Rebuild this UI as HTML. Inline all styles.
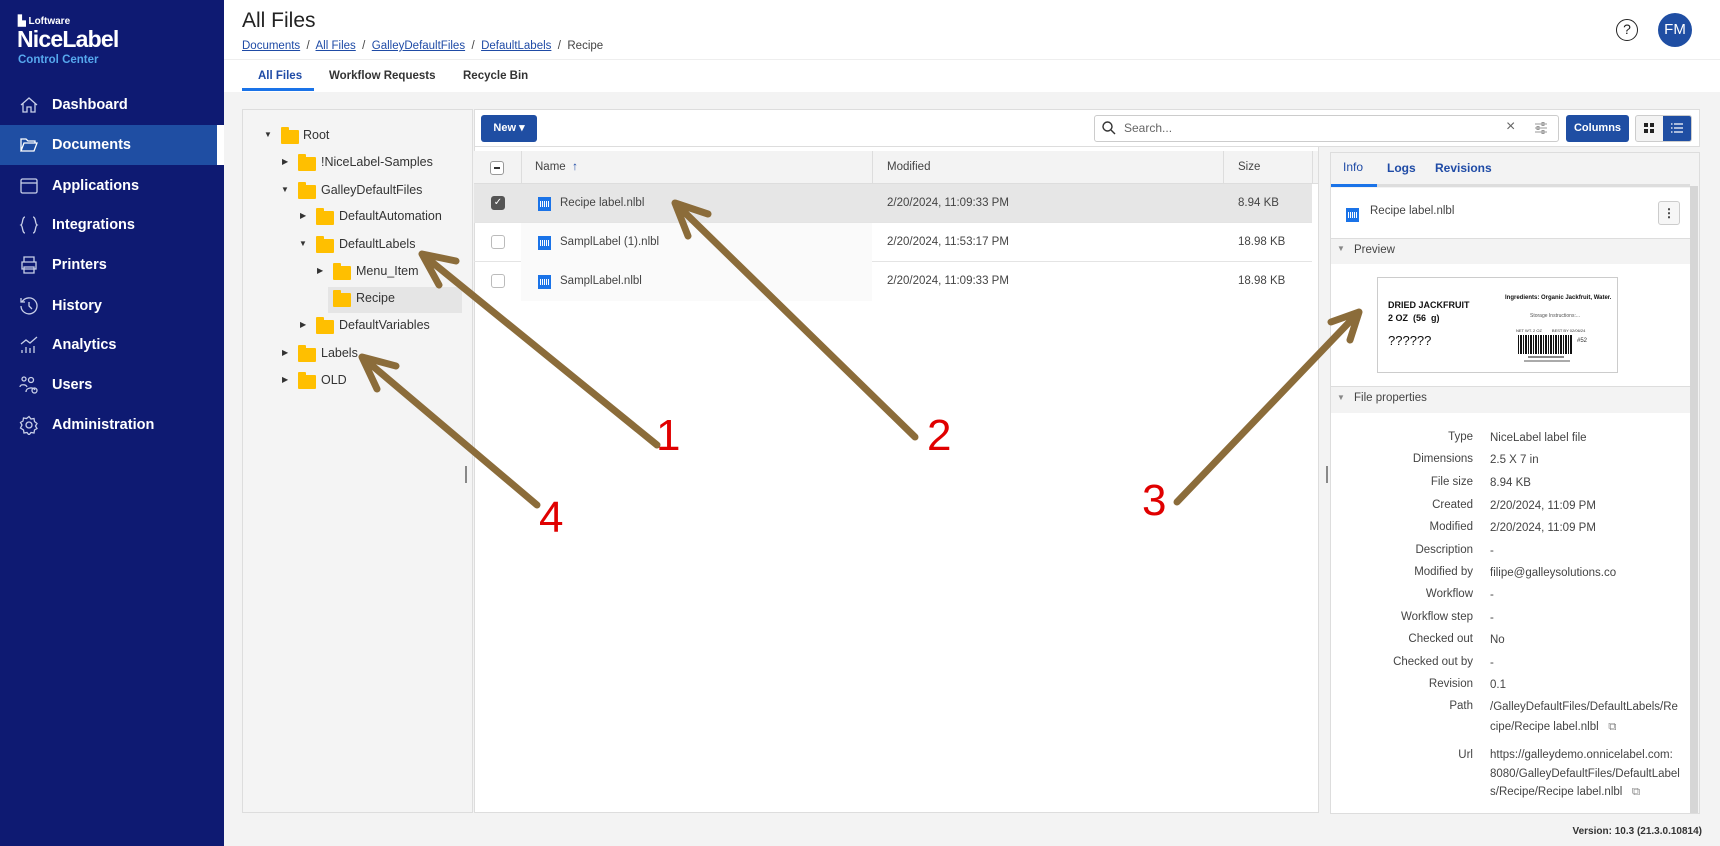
<!DOCTYPE html>
<html><head><meta charset="utf-8">
<style>
*{box-sizing:border-box;margin:0;padding:0}
body{width:1720px;height:846px;overflow:hidden;background:#f3f3f3;font-family:"Liberation Sans",sans-serif;color:#333;position:relative}
.a{position:absolute}
.sb{left:0;top:0;width:224px;height:846px;background:#0e1a72}
.nav{position:absolute;left:0;width:224px;height:40px;color:#fff;font-size:14.5px;font-weight:bold;line-height:40px;padding-left:52px}
.nav svg{position:absolute;left:19px;top:10px}
.hdr{left:224px;top:0;width:1496px;height:92px;background:#fff}
.bc a{color:#1f4ba6;text-decoration:underline}
.tree{left:242px;top:109px;width:231px;height:704px;background:#f4f4f4;border:1px solid #ddd}
.ti{position:absolute;font-size:12.5px;color:#333;height:26px;line-height:26px}
.fold{position:absolute;width:18px;height:14px;background:#ffbf00;border-radius:1px}
.fold:before{content:"";position:absolute;left:0;top:-3px;width:8px;height:4px;background:#ffbf00;border-radius:1px 1px 0 0}
.tri{position:absolute;font-size:8px;color:#333}
.main{left:474px;top:109px;width:1226px;height:704px;background:#fff;border:1px solid #ddd}
.row{position:absolute;left:474px;width:838px;height:39px;border-bottom:1px solid #e4e4e4;font-size:11.5px;line-height:39px;color:#444}
.cb{position:absolute;left:17px;top:12px;width:14px;height:14px;border:1px solid #bbb;border-radius:3px;background:#fff}
.ficon{position:absolute;width:13px;height:14px;background:#1a73e8}
.ficon:after{content:"";position:absolute;left:2px;top:4px;width:9px;height:6px;background:repeating-linear-gradient(90deg,#fff 0 1px,transparent 1px 2px)}
.rp{left:1330px;top:152px;width:370px;height:662px;background:#fff;border:1px solid #ddd}
.pl{position:absolute;width:160px;text-align:right;left:1313px;font-size:11.5px;color:#444}
.pv{position:absolute;left:1490px;font-size:11.5px;color:#444;line-height:20px}
</style></head><body>
<div class="a sb"></div>
<div class="a" style="left:18px;top:16px;color:#fff;font-size:10px;font-weight:bold">▙ Loftware</div>
<div class="a" style="left:17px;top:26px;color:#fff;font-size:23px;font-weight:bold;letter-spacing:-0.8px">NiceLabel</div>
<div class="a" style="left:18px;top:54px;color:#56a8ee;font-size:11.5px;font-weight:bold">Control Center</div>

<div class="nav" style="top:85px"><svg width="20" height="20" viewBox="0 0 20 20" fill="none" stroke="#c8cfe8" stroke-width="1.3"><path d="M2 10L10 3l8 7M4 8.5V17h4v-5h4v5h4V8.5"/></svg>Dashboard</div>
<div class="nav" style="top:125px;background:#1f4ea3"><svg width="20" height="20" viewBox="0 0 20 20" fill="none" stroke="#fff" stroke-width="1.3"><path d="M2 16V4h5l2 2h7v2M2 16l3-8h13l-3 8z"/></svg>Documents</div>
<div class="a" style="left:217px;top:125px;width:7px;height:40px;background:#fff"></div>
<div class="nav" style="top:166px"><svg width="20" height="20" viewBox="0 0 20 20" fill="none" stroke="#c8cfe8" stroke-width="1.3"><rect x="2" y="3" width="16" height="14" rx="1.5"/><path d="M2 7h16"/></svg>Applications</div>
<div class="nav" style="top:205px"><svg width="20" height="20" viewBox="0 0 20 20" fill="none" stroke="#c8cfe8" stroke-width="1.3"><path d="M6 2C3 2 4 9 2 10c2 1 1 8 4 8M14 2c3 0 2 7 4 8-2 1-1 8-4 8"/></svg>Integrations</div>
<div class="nav" style="top:245px"><svg width="20" height="20" viewBox="0 0 20 20" fill="none" stroke="#c8cfe8" stroke-width="1.3"><path d="M5 7V2h10v5M3 7h14v7H3zM5 12h10v6H5z"/></svg>Printers</div>
<div class="nav" style="top:286px"><svg width="20" height="20" viewBox="0 0 20 20" fill="none" stroke="#c8cfe8" stroke-width="1.3"><path d="M3 6a8 8 0 1 1-1 4M2 2v4h4M10 6v4l3 3"/></svg>History</div>
<div class="nav" style="top:325px"><svg width="20" height="20" viewBox="0 0 20 20" fill="none" stroke="#c8cfe8" stroke-width="1.3"><path d="M2 9l5-4 4 3 7-6M3 18v-3M7 18v-6M11 18v-5M15 18v-7"/></svg>Analytics</div>
<div class="nav" style="top:365px"><svg width="20" height="20" viewBox="0 0 20 20" fill="none" stroke="#c8cfe8" stroke-width="1.3"><circle cx="5" cy="4" r="2"/><circle cx="12" cy="5" r="2.5"/><path d="M1 12c0-3 6-3 7 0M7 17c0-5 8-5 9-2"/><circle cx="15.5" cy="15.5" r="2.5"/></svg>Users</div>
<div class="nav" style="top:405px"><svg width="20" height="20" viewBox="0 0 20 20" fill="none" stroke="#c8cfe8" stroke-width="1.3"><circle cx="10" cy="10" r="3"/><path d="M10 1.5l2 2.5 3-.5.5 3 2.5 2-1.5 2.5 1.5 2.5-2.5 1.5-.5 3-3-.5-2 2.5-2-2.5-3 .5-.5-3L1.5 13 3 10 1.5 7.5 4 6l.5-3 3 .5z"/></svg>Administration</div>

<div class="a hdr"></div>
<div class="a" style="left:242px;top:9px;font-size:21px;color:#222">All Files</div>
<div class="a bc" style="left:242px;top:40px;font-size:11.5px;color:#444"><a>Documents</a> &nbsp;/&nbsp; <a>All Files</a> &nbsp;/&nbsp; <a>GalleyDefaultFiles</a> &nbsp;/&nbsp; <a>DefaultLabels</a> &nbsp;/&nbsp; Recipe</div>
<div class="a" style="left:224px;top:59px;width:1496px;height:1px;background:#eee"></div>
<div class="a" style="left:258px;top:70px;font-size:11.5px;color:#1f4ba6;font-weight:bold">All Files</div>
<div class="a" style="left:329px;top:70px;font-size:11.5px;color:#333;font-weight:bold">Workflow Requests</div>
<div class="a" style="left:463px;top:70px;font-size:11.5px;color:#333;font-weight:bold">Recycle Bin</div>
<div class="a" style="left:242px;top:88px;width:72px;height:3px;background:#1a73e8"></div>
<div class="a" style="left:1616px;top:19px;width:22px;height:22px;border:1.6px solid #222;border-radius:50%;font-size:14px;text-align:center;line-height:19px;color:#222">?</div>
<div class="a" style="left:1658px;top:13px;width:34px;height:34px;background:#1f4ea3;border-radius:50%;color:#fff;font-size:15px;text-align:center;line-height:34px">FM</div>

<div class="a tree"></div>
<div class="a" style="left:328px;top:287px;width:134px;height:26px;background:#e5e5e5"></div>
<div class="tri" style="left:264px;top:130px">▼</div><div class="fold" style="left:281px;top:130px"></div><div class="ti" style="left:303px;top:122px">Root</div>
<div class="tri" style="left:282px;top:157px">▶</div><div class="fold" style="left:298px;top:157px"></div><div class="ti" style="left:321px;top:149px">!NiceLabel-Samples</div>
<div class="tri" style="left:281px;top:185px">▼</div><div class="fold" style="left:298px;top:185px"></div><div class="ti" style="left:321px;top:177px">GalleyDefaultFiles</div>
<div class="tri" style="left:300px;top:211px">▶</div><div class="fold" style="left:316px;top:211px"></div><div class="ti" style="left:339px;top:203px">DefaultAutomation</div>
<div class="tri" style="left:299px;top:239px">▼</div><div class="fold" style="left:316px;top:239px"></div><div class="ti" style="left:339px;top:231px">DefaultLabels</div>
<div class="tri" style="left:317px;top:266px">▶</div><div class="fold" style="left:333px;top:266px"></div><div class="ti" style="left:356px;top:258px">Menu_Item</div>
<div class="fold" style="left:333px;top:293px"></div><div class="ti" style="left:356px;top:285px">Recipe</div>
<div class="tri" style="left:300px;top:320px">▶</div><div class="fold" style="left:316px;top:320px"></div><div class="ti" style="left:339px;top:312px">DefaultVariables</div>
<div class="tri" style="left:282px;top:348px">▶</div><div class="fold" style="left:298px;top:348px"></div><div class="ti" style="left:321px;top:340px">Labels</div>
<div class="tri" style="left:282px;top:375px">▶</div><div class="fold" style="left:298px;top:375px"></div><div class="ti" style="left:321px;top:367px">OLD</div>
<div class="a" style="left:465px;top:466px;width:2px;height:17px;background:#888"></div>

<div class="a main"></div>
<div class="a" style="left:1319px;top:147px;width:381px;height:666px;background:#f3f3f3"></div>
<div class="a" style="left:1318px;top:147px;width:1px;height:666px;background:#ddd"></div>
<div class="a" style="left:474px;top:146px;width:1226px;height:1px;background:#ddd"></div>
<div class="a" style="left:481px;top:115px;width:56px;height:27px;background:#1f4ea3;border-radius:3px;color:#fff;font-size:11px;font-weight:bold;text-align:center;line-height:27px">New ▾</div>
<div class="a" style="left:1094px;top:115px;width:465px;height:27px;border:1px solid #ccc;border-radius:3px;background:#fff"></div>
<svg class="a" style="left:1101px;top:120px" width="16" height="16" viewBox="0 0 16 16" fill="none" stroke="#333" stroke-width="1.4"><circle cx="6.5" cy="6.5" r="4.5"/><path d="M10 10l4 4"/></svg>
<div class="a" style="left:1124px;top:121px;font-size:12px;color:#666">Search...</div>
<div class="a" style="left:1506px;top:118px;font-size:16px;color:#666">×</div>
<svg class="a" style="left:1534px;top:121px" width="14" height="14" viewBox="0 0 14 14" stroke="#999" stroke-width="1" fill="none"><path d="M1 3h12M1 7h12M1 11h12"/><rect x="8" y="1.5" width="2" height="3"/><rect x="3" y="5.5" width="2" height="3"/><rect x="8" y="9.5" width="2" height="3"/></svg>
<div class="a" style="left:1566px;top:115px;width:63px;height:27px;background:#1f4ea3;border-radius:3px;color:#fff;font-size:11px;font-weight:bold;text-align:center;line-height:27px">Columns</div>
<div class="a" style="left:1635px;top:115px;width:57px;height:27px;border:1px solid #ccc;border-radius:3px;background:#f3f3f3;overflow:hidden"><div style="position:absolute;right:0;top:0;width:28px;height:27px;background:#1f4ea3"></div></div>
<svg class="a" style="left:1643px;top:122px" width="12" height="12"><rect x="1" y="1" width="4" height="4" fill="#222"/><rect x="7" y="1" width="4" height="4" fill="#222"/><rect x="1" y="7" width="4" height="4" fill="#222"/><rect x="7" y="7" width="4" height="4" fill="#222"/></svg>
<svg class="a" style="left:1671px;top:122px" width="12" height="12" stroke="#fff" stroke-width="1.3"><path d="M3 2h9M3 6h9M3 10h9M0 2h1.5M0 6h1.5M0 10h1.5"/></svg>

<div class="a" style="left:474px;top:151px;width:844px;height:33px;background:#f3f3f3;border-bottom:1px solid #ddd"></div>
<div class="a" style="left:521px;top:151px;width:1px;height:33px;background:#ddd"></div>
<div class="a" style="left:872px;top:151px;width:1px;height:33px;background:#ddd"></div>
<div class="a" style="left:1223px;top:151px;width:1px;height:33px;background:#ddd"></div>
<div class="a" style="left:1312px;top:151px;width:1px;height:33px;background:#ddd"></div>
<div class="a" style="left:490px;top:161px;width:14px;height:14px;border:1px solid #999;border-radius:3px;background:#fff"><div style="margin:5px 3px;height:2px;background:#333"></div></div>
<div class="a" style="left:535px;top:161px;font-size:11.5px;color:#444">Name &nbsp;<span style="color:#1f4ba6">↑</span></div>
<div class="a" style="left:887px;top:161px;font-size:11.5px;color:#444">Modified</div>
<div class="a" style="left:1238px;top:161px;font-size:11.5px;color:#444">Size</div>

<div class="row" style="top:184px;background:#e6e6e6"><div class="cb" style="background:#555;border-color:#555;color:#fff;font-size:10px;line-height:12px;text-align:center">✓</div><div class="ficon" style="left:64px;top:13px"></div><span style="position:absolute;left:86px">Recipe label.nlbl</span><span style="position:absolute;left:413px">2/20/2024, 11:09:33 PM</span><span style="position:absolute;left:764px">8.94 KB</span></div>
<div class="row" style="top:223px"><div style="position:absolute;left:47px;top:0;width:351px;height:39px;background:#fafafa"></div><div class="cb"></div><div class="ficon" style="left:64px;top:13px"></div><span style="position:absolute;left:86px">SamplLabel (1).nlbl</span><span style="position:absolute;left:413px">2/20/2024, 11:53:17 PM</span><span style="position:absolute;left:764px">18.98 KB</span></div>
<div class="row" style="top:262px;border-bottom:none"><div style="position:absolute;left:47px;top:0;width:351px;height:39px;background:#fafafa"></div><div class="cb"></div><div class="ficon" style="left:64px;top:13px"></div><span style="position:absolute;left:86px">SamplLabel.nlbl</span><span style="position:absolute;left:413px">2/20/2024, 11:09:33 PM</span><span style="position:absolute;left:764px">18.98 KB</span></div>
<div class="a" style="left:1326px;top:466px;width:2px;height:17px;background:#888"></div>

<div class="a rp" style="background:#f3f3f3"></div>
<div class="a" style="left:1331px;top:188px;width:359px;height:625px;background:#fff"></div>
<div class="a" style="left:1690px;top:186px;width:8px;height:627px;background:#d6d6d6"></div>
<div class="a" style="left:1343px;top:160px;font-size:12px;color:#1f4ba6">Info</div>
<div class="a" style="left:1387px;top:161px;font-size:12px;color:#1f4ba6;font-weight:bold">Logs</div>
<div class="a" style="left:1435px;top:161px;font-size:12px;color:#1f4ba6;font-weight:bold">Revisions</div>
<div class="a" style="left:1331px;top:184px;width:359px;height:3px;background:#ddd"></div>
<div class="a" style="left:1331px;top:184px;width:46px;height:3px;background:#1a73e8"></div>
<div class="ficon" style="left:1346px;top:208px"></div>
<div class="a" style="left:1370px;top:205px;font-size:11.5px;color:#444">Recipe label.nlbl</div>
<div class="a" style="left:1658px;top:201px;width:22px;height:24px;border:1px solid #ccc;border-radius:3px;background:#f6f6f6;text-align:center;font-size:12px;line-height:22px;font-weight:bold">⋮</div>
<div class="a" style="left:1331px;top:238px;width:359px;height:26px;background:#f3f3f3;border-top:1px solid #ddd"></div>
<div class="a" style="left:1337px;top:244px;font-size:8px;color:#888">▼</div>
<div class="a" style="left:1354px;top:244px;font-size:11.5px;color:#444">Preview</div>
<div class="a" style="left:1377px;top:277px;width:241px;height:96px;border:1px solid #ccc;background:#fff">
 <div class="a" style="left:10px;top:21px;font-size:9px;font-weight:bold;color:#111;line-height:13px">DRIED JACKFRUIT<br>2 OZ &nbsp;(56 &nbsp;g)</div>
 <div class="a" style="left:10px;top:55px;font-size:13px;color:#111">??????</div>
 <div class="a" style="left:127px;top:17px;font-size:6px;font-weight:bold;color:#111">Ingredients: Organic Jackfruit, Water.</div>
 <div class="a" style="left:152px;top:35px;font-size:5px;color:#555">Storage Instructions:...</div>
 <div class="a" style="left:138px;top:50px;font-size:4px;color:#333">NET WT. 2 OZ &nbsp;&nbsp;&nbsp;&nbsp;&nbsp;&nbsp;&nbsp; BEST BY 02/06/24</div>
 <div class="a" style="left:140px;top:57px;width:54px;height:19px;background:repeating-linear-gradient(90deg,#111 0 1px,#fff 1px 2px,#111 2px 4px,#fff 4px 5px)"></div>
 <div class="a" style="left:199px;top:60px;font-size:6px;color:#333">#52</div>
 <div class="a" style="left:150px;top:78px;width:36px;height:2px;background:#888"></div>
 <div class="a" style="left:146px;top:82px;width:46px;height:2px;background:#aaa"></div>
</div>
<div class="a" style="left:1331px;top:386px;width:359px;height:27px;background:#f3f3f3;border-top:1px solid #ddd"></div>
<div class="a" style="left:1337px;top:393px;font-size:8px;color:#888">▼</div>
<div class="a" style="left:1354px;top:392px;font-size:11.5px;color:#444">File properties</div>

<div class="pl" style="top:431px">Type</div><div class="pv" style="top:428px">NiceLabel label file</div>
<div class="pl" style="top:453px">Dimensions</div><div class="pv" style="top:450px">2.5 X 7 in</div>
<div class="pl" style="top:476px">File size</div><div class="pv" style="top:473px">8.94 KB</div>
<div class="pl" style="top:499px">Created</div><div class="pv" style="top:496px">2/20/2024, 11:09 PM</div>
<div class="pl" style="top:521px">Modified</div><div class="pv" style="top:518px">2/20/2024, 11:09 PM</div>
<div class="pl" style="top:544px">Description</div><div class="pv" style="top:541px">-</div>
<div class="pl" style="top:566px">Modified by</div><div class="pv" style="top:563px">filipe@galleysolutions.co</div>
<div class="pl" style="top:588px">Workflow</div><div class="pv" style="top:585px">-</div>
<div class="pl" style="top:611px">Workflow step</div><div class="pv" style="top:608px">-</div>
<div class="pl" style="top:633px">Checked out</div><div class="pv" style="top:630px">No</div>
<div class="pl" style="top:656px">Checked out by</div><div class="pv" style="top:653px">-</div>
<div class="pl" style="top:678px">Revision</div><div class="pv" style="top:675px">0.1</div>
<div class="pl" style="top:700px">Path</div><div class="pv" style="top:697px">/GalleyDefaultFiles/DefaultLabels/Re<br>cipe/Recipe label.nlbl &nbsp;&nbsp;<span style="color:#888">⧉</span></div>
<div class="pl" style="top:749px">Url</div><div class="pv" style="top:746px;line-height:18.5px">https://galleydemo.onnicelabel.com:<br>8080/GalleyDefaultFiles/DefaultLabel<br>s/Recipe/Recipe label.nlbl &nbsp;&nbsp;<span style="color:#888">⧉</span></div>

<div class="a" style="left:1500px;top:826px;width:202px;text-align:right;font-size:10px;font-weight:bold;color:#333">Version: 10.3 (21.3.0.10814)</div>

<svg class="a" style="left:0;top:0" width="1720" height="846" fill="none" stroke="#8b6c3a" stroke-width="7" stroke-linecap="round" stroke-linejoin="round">
<path d="M657 445L422 254M456 261L422 254L439 285"/>
<path d="M915 437L675 203M708 214L675 203L688 236"/>
<path d="M1177 502L1359 312M1331 322L1359 312L1350 340"/>
<path d="M537 505L362 357M396 366L362 357L377 389"/>
</svg>
<div class="a" style="left:656px;top:411px;font-size:44px;color:#e00000">1</div>
<div class="a" style="left:927px;top:411px;font-size:44px;color:#e00000">2</div>
<div class="a" style="left:1142px;top:476px;font-size:44px;color:#e00000">3</div>
<div class="a" style="left:539px;top:493px;font-size:44px;color:#e00000">4</div>
</body></html>
